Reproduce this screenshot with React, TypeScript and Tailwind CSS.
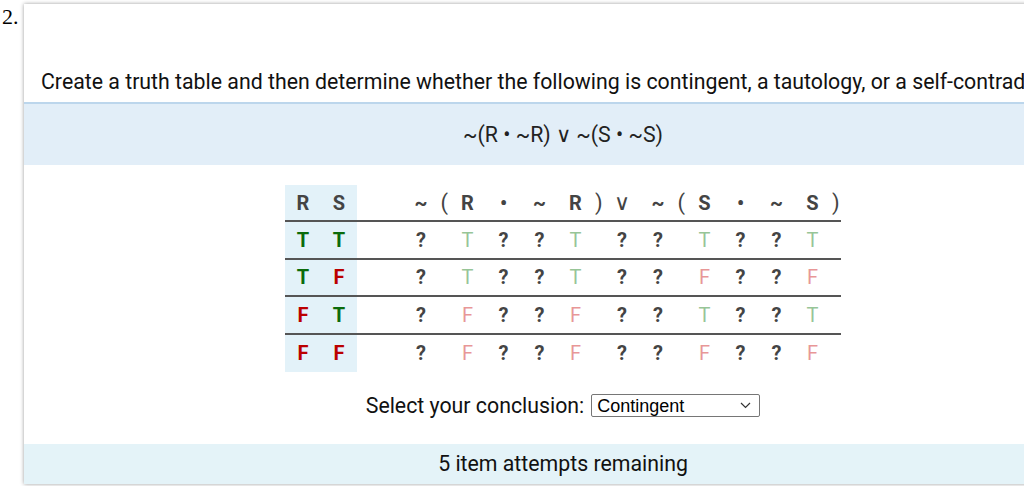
import React from "react";

const cols: { label: string; w: string }[] = [
  { label: "~", w: "w-[36px]" },
  { label: "(", w: "w-[10.5px]" },
  { label: "R", w: "w-[36px]" },
  { label: "•", w: "w-[36px]" },
  { label: "~", w: "w-[36px]" },
  { label: "R", w: "w-[36px]" },
  { label: ")", w: "w-[10.5px]" },
  { label: "∨", w: "w-[36px]" },
  { label: "~", w: "w-[36px]" },
  { label: "(", w: "w-[10.5px]" },
  { label: "S", w: "w-[36px]" },
  { label: "•", w: "w-[36px]" },
  { label: "~", w: "w-[36px]" },
  { label: "S", w: "w-[36px]" },
  { label: ")", w: "w-[10.5px]" },
];

const rows = [
  ["T", "T"],
  ["T", "F"],
  ["F", "T"],
  ["F", "F"],
];

function cellValue(label: string, r: string, s: string): string {
  if (label === "(" || label === ")") return "";
  if (label === "R") return r;
  if (label === "S") return s;
  return "?";
}

function Cell({ v, w }: { v: string; w: string }) {
  let cls = "text-[#444] font-bold";
  if (v === "T") cls = "text-[#97c597] font-normal";
  if (v === "F") cls = "text-[#e89797] font-normal";
  return <div className={`${w} flex justify-center ${cls}`}>{v}</div>;
}

function Ref({ v }: { v: string }) {
  return (
    <div
      className={`w-[36px] h-full flex items-center justify-center bg-[#e3f2f9] font-bold ${
        v === "T" ? "text-[#0b6b0b]" : "text-[#bb0000]"
      }`}
    >
      {v}
    </div>
  );
}

export default function App() {
  return (
    <div className="w-[1024px] h-[486px] overflow-hidden bg-white font-['Roboto',sans-serif]">
      <div className="flex">
        <div className="w-[24px] shrink-0 pl-[2px] pt-[5px] font-['Liberation_Serif',serif] text-[22px] leading-[24px] text-black">
          2.
        </div>
        <div className="mt-[4px] w-[1078px] shrink-0 bg-white shadow-[0_0_4px_rgba(0,0,0,0.4)]">
          <div className="pt-[66px] pl-[17px] h-[90px] text-[21.3px] leading-[24px] text-[#111] whitespace-nowrap">
            Create a truth table and then determine whether the following is contingent, a tautology, or a self-contradiction.
          </div>
          <div className="mt-[8px] h-[63px] border-t-2 border-[#bcd6ec] bg-[#e2eef8] flex items-center justify-center text-[21.3px] text-[#222]">
            ~(R • ~R) ∨ ~(S • ~S)
          </div>
          <div className="mt-[20px] flex justify-center">
            <div className="w-[556px] text-[20px]">
              <div className="flex h-[37px] items-center border-b-2 border-[#555]">
                <div className="w-[36px] h-full flex items-center justify-center bg-[#e3f2f9] font-bold text-[#444]">R</div>
                <div className="w-[36px] h-full flex items-center justify-center bg-[#e3f2f9] font-bold text-[#444]">S</div>
                <div className="w-[46px]" />
                {cols.map((c, i) => (
                  <div
                    key={i}
                    className={`${c.w} flex justify-center text-[#444] ${
                      c.label === "(" || c.label === ")" || c.label === "∨" ? "font-normal text-[22px]" : "font-bold"
                    }`}
                  >
                    {c.label}
                  </div>
                ))}
              </div>
              {rows.map(([r, s], ri) => (
                <div
                  key={ri}
                  className={`flex h-[37.5px] items-center ${ri < 3 ? "border-b-2 border-[#555]" : ""}`}
                >
                  <Ref v={r} />
                  <Ref v={s} />
                  <div className="w-[46px]" />
                  {cols.map((c, i) => (
                    <Cell key={i} v={cellValue(c.label, r, s)} w={c.w} />
                  ))}
                </div>
              ))}
            </div>
          </div>
          <div className="mt-[22px] h-[23px] flex items-center justify-center gap-[7px]">
            <span className="text-[21.3px] text-[#111]">Select your conclusion:</span>
            <div className="w-[169px] h-[23px] border border-[#767676] rounded-[2px] bg-white flex items-center justify-between pl-[5px] pr-[8px] font-['Liberation_Sans',sans-serif] text-[18px] leading-[20px] text-black">
              <span>Contingent</span>
              <svg width="11" height="7" viewBox="0 0 11 7">
                <path d="M1 1 L5.5 5.5 L10 1" fill="none" stroke="#333" strokeWidth="1.2" />
              </svg>
            </div>
          </div>
          <div className="mt-[27px] h-[40px] bg-[#e4f3f8] flex items-center justify-center text-[21.3px] text-[#111]">
            5 item attempts remaining
          </div>
        </div>
      </div>
    </div>
  );
}
